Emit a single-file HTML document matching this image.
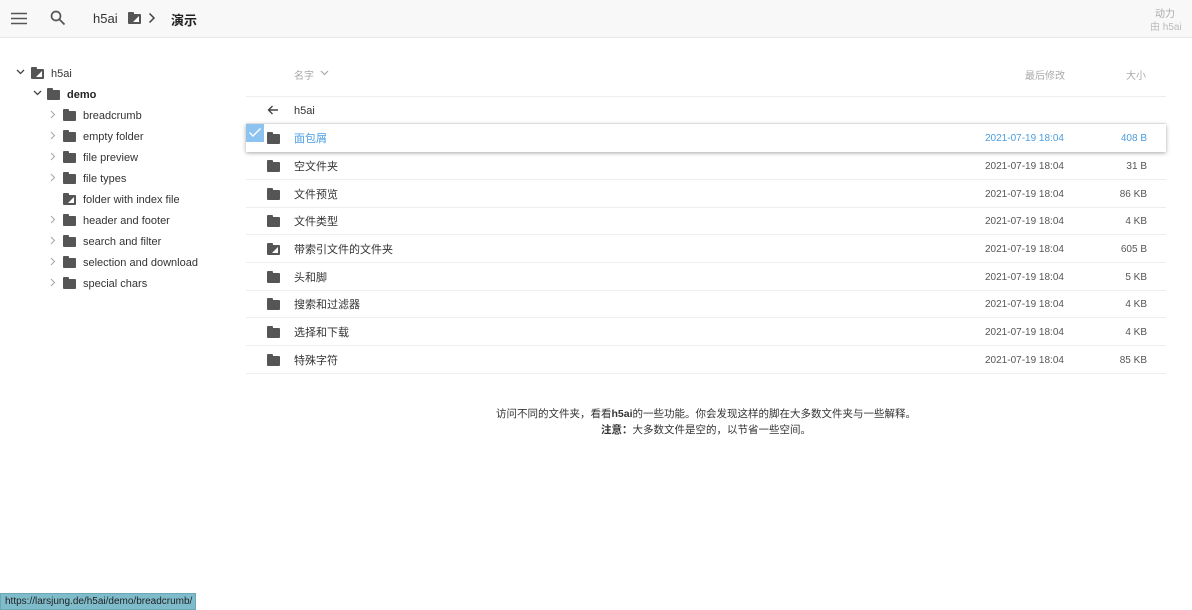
<!DOCTYPE html>
<html><head><meta charset="utf-8"><style>
*{box-sizing:border-box;margin:0;padding:0}
body{width:1192px;height:610px;overflow:hidden;background:#fff;font-family:"Liberation Sans","Noto Sans CJK SC",sans-serif;font-size:11px;color:#333;position:relative}
.hdr{position:absolute;left:0;top:0;width:1192px;height:38px;background:#f8f8f8;border-bottom:1px solid #e8e8e8}
.abs{position:absolute;white-space:nowrap}
.fold{position:absolute;width:13px;height:10px;background:#555;border-radius:1px}
.fold:before{content:"";position:absolute;left:0;top:-2px;width:6px;height:3px;background:#555;border-radius:1px 1px 0 0}
.foldi:after{content:"";position:absolute;right:2px;bottom:2px;border-left:6px solid transparent;border-bottom:6px solid #fff}
.tree{position:absolute;font-size:11px;color:#333;white-space:nowrap;line-height:16px}
.row{position:absolute;left:246px;width:920px;height:28px;border-bottom:1px solid #eee;line-height:30px;white-space:nowrap}
.row .n{position:absolute;left:48px;top:0;font-size:11px}
.row .d{position:absolute;left:739px;top:0;font-size:10px;color:#555}
.row .s{position:absolute;right:19px;top:0;font-size:10px;color:#555}
.row .fold{left:21px;top:10px}
</style></head><body>
<div class="hdr">
 <svg class="abs" style="left:11px;top:12px" width="16" height="13"><path d="M0 1.5h16M0 6.5h16M0 11.5h16" stroke="#555" stroke-width="1.6"/></svg>
 <svg class="abs" style="left:50px;top:10px" width="16" height="16"><circle cx="6" cy="6" r="4.5" stroke="#555" stroke-width="1.7" fill="none"/><path d="M9.5 9.5L14.5 14.5" stroke="#555" stroke-width="1.8"/></svg>
 <div class="abs" style="left:93px;top:11px;font-size:13px;color:#333">h5ai</div>
 <div class="fold foldi" style="left:128px;top:14px"></div>
 <svg class="abs" style="left:148px;top:12px" width="8" height="12"><path d="M1.5 1.5L6 6L1.5 10.5" stroke="#444" stroke-width="1.5" fill="none"/></svg>
 <div class="abs" style="left:171px;top:10px;font-size:13px;font-weight:bold;color:#222">演示</div>
 <div class="abs" style="left:1155px;top:5px;font-size:10px;color:#aaa">动力</div>
 <div class="abs" style="left:1150px;top:18px;font-size:10px;color:#bbb">由 h5ai</div>
</div>

<svg class="abs" style="left:16px;top:69px" width="9" height="6"><path d="M1 1L4.5 4.5L8 1" stroke="#444" stroke-width="1.3" fill="none"/></svg>
<div class="fold foldi" style="left:31px;top:69px"></div>
<div class="tree" style="left:51px;top:66px">h5ai</div>
<svg class="abs" style="left:33px;top:90px" width="9" height="6"><path d="M1 1L4.5 4.5L8 1" stroke="#444" stroke-width="1.3" fill="none"/></svg>
<div class="fold" style="left:47px;top:90px"></div>
<div class="tree" style="left:67px;top:87px;font-weight:bold;color:#222">demo</div>

<svg class="abs" style="left:50px;top:110px" width="6" height="9"><path d="M1 1L4.5 4.5L1 8" stroke="#aaa" stroke-width="1.1" fill="none"/></svg><div class="fold" style="left:63px;top:111px"></div><div class="tree" style="left:83px;top:108px">breadcrumb</div>
<svg class="abs" style="left:50px;top:131px" width="6" height="9"><path d="M1 1L4.5 4.5L1 8" stroke="#aaa" stroke-width="1.1" fill="none"/></svg><div class="fold" style="left:63px;top:132px"></div><div class="tree" style="left:83px;top:129px">empty folder</div>
<svg class="abs" style="left:50px;top:152px" width="6" height="9"><path d="M1 1L4.5 4.5L1 8" stroke="#aaa" stroke-width="1.1" fill="none"/></svg><div class="fold" style="left:63px;top:153px"></div><div class="tree" style="left:83px;top:150px">file preview</div>
<svg class="abs" style="left:50px;top:173px" width="6" height="9"><path d="M1 1L4.5 4.5L1 8" stroke="#aaa" stroke-width="1.1" fill="none"/></svg><div class="fold" style="left:63px;top:174px"></div><div class="tree" style="left:83px;top:171px">file types</div>
<div class="fold foldi" style="left:63px;top:195px"></div><div class="tree" style="left:83px;top:192px">folder with index file</div>
<svg class="abs" style="left:50px;top:215px" width="6" height="9"><path d="M1 1L4.5 4.5L1 8" stroke="#aaa" stroke-width="1.1" fill="none"/></svg><div class="fold" style="left:63px;top:216px"></div><div class="tree" style="left:83px;top:213px">header and footer</div>
<svg class="abs" style="left:50px;top:236px" width="6" height="9"><path d="M1 1L4.5 4.5L1 8" stroke="#aaa" stroke-width="1.1" fill="none"/></svg><div class="fold" style="left:63px;top:237px"></div><div class="tree" style="left:83px;top:234px">search and filter</div>
<svg class="abs" style="left:50px;top:257px" width="6" height="9"><path d="M1 1L4.5 4.5L1 8" stroke="#aaa" stroke-width="1.1" fill="none"/></svg><div class="fold" style="left:63px;top:258px"></div><div class="tree" style="left:83px;top:255px">selection and download</div>
<svg class="abs" style="left:50px;top:278px" width="6" height="9"><path d="M1 1L4.5 4.5L1 8" stroke="#aaa" stroke-width="1.1" fill="none"/></svg><div class="fold" style="left:63px;top:279px"></div><div class="tree" style="left:83px;top:276px">special chars</div>

<div class="abs" style="left:294px;top:67px;font-size:10px;color:#aaa">名字</div>
<svg class="abs" style="left:320px;top:70px" width="9" height="6"><path d="M1 1L4.5 4.5L8 1" stroke="#aaa" stroke-width="1.2" fill="none"/></svg>
<div class="abs" style="left:1025px;top:67px;font-size:10px;color:#aaa">最后修改</div>
<div class="abs" style="left:1126px;top:67px;font-size:10px;color:#aaa">大小</div>
<div class="abs" style="left:246px;top:96px;width:920px;border-top:1px solid #eee"></div>

<div class="row" style="top:96px">
 <svg class="abs" style="left:21px;top:9px" width="12" height="10"><path d="M11 5H1.5M5.5 1L1.5 5L5.5 9" stroke="#444" stroke-width="1.4" fill="none"/></svg>
 <div class="n">h5ai</div>
</div>
<div class="row" style="top:124px;background:#fff;box-shadow:0 1px 4px rgba(0,0,0,.35);border:none;z-index:2">
 <div class="abs" style="left:0;top:0;width:18px;height:18px;background:#8cc3f0"></div>
 <svg class="abs" style="left:2px;top:3px" width="14" height="11"><path d="M1.5 5.5L5 9L12.5 1.5" stroke="#fff" stroke-width="1.4" fill="none"/></svg>
 <div class="fold"></div>
 <div class="n" style="color:#4a9de0">面包屑</div>
 <div class="d" style="color:#4a9de0">2021-07-19 18:04</div>
 <div class="s" style="color:#4a9de0">408 B</div>
</div>
<div class="row" style="top:152px"><div class="fold"></div><div class="n">空文件夹</div><div class="d">2021-07-19 18:04</div><div class="s">31 B</div></div>
<div class="row" style="top:180px"><div class="fold"></div><div class="n">文件预览</div><div class="d">2021-07-19 18:04</div><div class="s">86 KB</div></div>
<div class="row" style="top:207px"><div class="fold"></div><div class="n">文件类型</div><div class="d">2021-07-19 18:04</div><div class="s">4 KB</div></div>
<div class="row" style="top:235px"><div class="fold foldi"></div><div class="n">带索引文件的文件夹</div><div class="d">2021-07-19 18:04</div><div class="s">605 B</div></div>
<div class="row" style="top:263px"><div class="fold"></div><div class="n">头和脚</div><div class="d">2021-07-19 18:04</div><div class="s">5 KB</div></div>
<div class="row" style="top:290px"><div class="fold"></div><div class="n">搜索和过滤器</div><div class="d">2021-07-19 18:04</div><div class="s">4 KB</div></div>
<div class="row" style="top:318px"><div class="fold"></div><div class="n">选择和下载</div><div class="d">2021-07-19 18:04</div><div class="s">4 KB</div></div>
<div class="row" style="top:346px"><div class="fold"></div><div class="n">特殊字符</div><div class="d">2021-07-19 18:04</div><div class="s">85 KB</div></div>

<div class="abs" style="left:246px;top:406px;width:920px;text-align:center;font-size:10.5px;line-height:16px;color:#333">访问不同的文件夹，看看<b>h5ai</b>的一些功能。你会发现这样的脚在大多数文件夹与一些解释。<br><b>注意：</b>大多数文件是空的，以节省一些空间。</div>

<div class="abs" style="left:0;top:593px;width:196px;height:17px;background:#7fbccb;border:1px solid #6aa8b8;font-size:10px;padding:2px 4px;color:#222">https://larsjung.de/h5ai/demo/breadcrumb/</div>
</body></html>
